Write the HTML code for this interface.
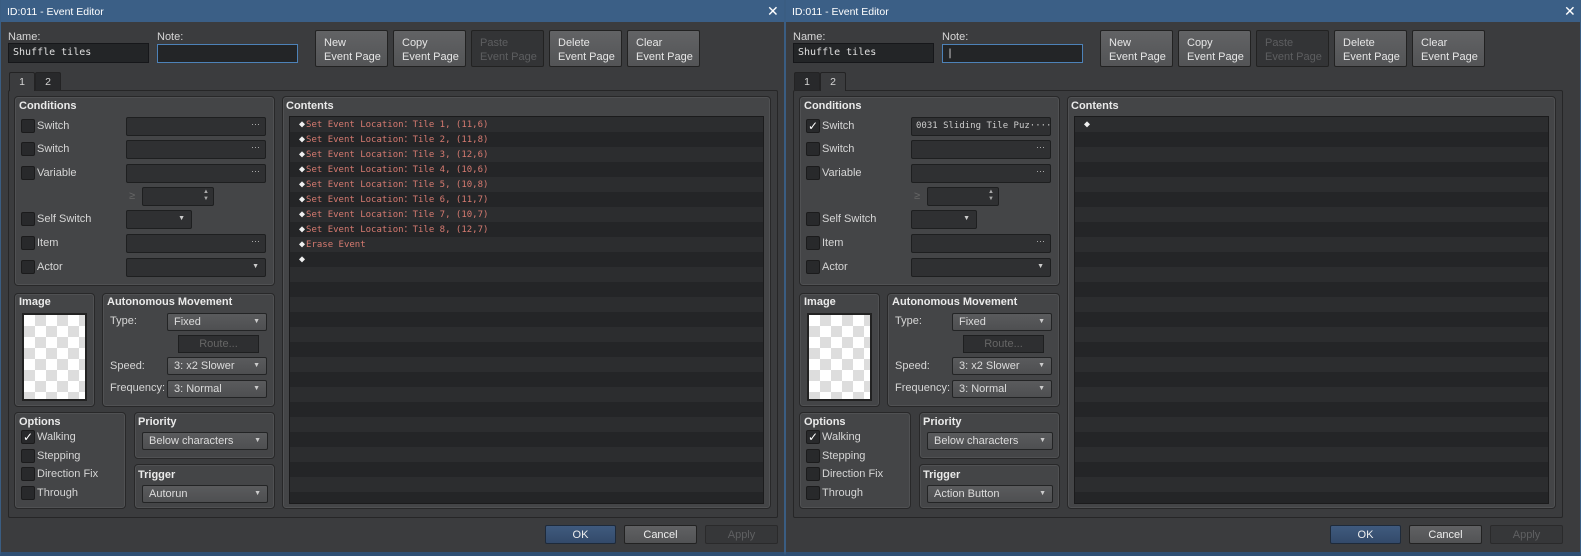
<!DOCTYPE html>
<html><head><meta charset="utf-8"><style>
*{box-sizing:border-box;margin:0;padding:0}
body{width:1581px;height:556px;background:#3a5d82;font-family:"Liberation Sans","DejaVu Sans",sans-serif;font-size:11px;color:#d6d6d6;overflow:hidden;position:relative}
.win{position:absolute;top:0;height:556px;background:#3b3c3e;border-left:1px solid #3a5d82;border-right:1px solid #3a5d82;border-bottom:4px solid #2f4f73;overflow:hidden}
.a{position:absolute;white-space:nowrap}
.title{left:0;right:0;top:0;height:22px;background:#3b5f86;color:#fff;padding:6px 0 0 6px;font-size:10.5px}
.x{position:absolute;top:3px;font-size:14px;color:#fff}
.inp{background:#232527;border:1px solid #16171a;font-family:"DejaVu Sans Mono",monospace;font-size:10px;padding:3px 4px;color:#e0e0e0}
.btn{background:linear-gradient(#626365,#535456);border:1px solid #222;border-radius:2px;color:#e6e6e6;padding:5px 0 0 8px;line-height:14px;font-size:11px}
.dis{background:#333436;color:#5d5e60}
.tab{height:19px;font-size:10.5px;text-align:center;padding-top:3px;border:1px solid #232324;border-bottom:none;border-radius:2px 2px 0 0}
.grp{background:#444547;border:1px solid #282829;border-radius:4px;box-shadow:inset 0 0 0 1px #505153}
.gt{font-weight:bold;color:#eaeaea;font-size:11px}
.cb{width:14px;height:14px;background:#28292b;border:1px solid #1b1b1c;border-radius:2px}
.fld{background:#2f3032;border:1px solid #1e1f20;border-radius:2px;height:19px;overflow:hidden}
.fld.e::after{content:"···";position:absolute;right:5px;top:1px;font-size:9px;color:#bbb}
.cmb{background:linear-gradient(#5a5b5d,#4e4f51);border:1px solid #232425;border-radius:2px;height:18px;padding:2px 0 0 6px;color:#dcdcdc}
.cmb::after,.dd::after{content:"▼";position:absolute;right:6px;top:4px;font-size:7px;color:#ccc}
.list{background:repeating-linear-gradient(#2c2d2f 0 15px,#242527 15px 30px);border:1px solid #1b1b1c}
.row{height:15px;line-height:15px;overflow:hidden;font-family:"DejaVu Sans Mono",monospace;font-size:9px;color:#d67a70;padding:0 0 0 9px;white-space:pre}
.row b{color:#f0f0f0;font-weight:normal;font-size:10px;margin-right:1px}
.chk{width:14px;height:14px;background:#28292b;border:1px solid #1b1b1c;border-radius:2px;color:#fff;font-size:12px;line-height:12px;text-align:center}
.ok{background:linear-gradient(#3f5a7e,#334a6a);border:1px solid #1e2a3a;color:#eee;text-align:center;padding-top:3px;border-radius:2px}
.cn{background:linear-gradient(#606163,#525355);border:1px solid #222;color:#eee;text-align:center;padding-top:3px;border-radius:2px}
.ap{background:#363739;border:1px solid #2a2a2b;color:#5f6062;text-align:center;padding-top:3px;border-radius:2px}
.chess{background-color:#fff;background-image:linear-gradient(45deg,#ddd 25%,transparent 25%,transparent 75%,#ddd 75%),linear-gradient(45deg,#ddd 25%,transparent 25%,transparent 75%,#ddd 75%);background-size:22px 22px;background-position:0 0,11px 11px;border:2px solid #222}
.l{margin-top:0}
</style></head><body>

<!-- WINDOW 1 -->
<div class="win" style="left:0;width:785px">
<div class="a title">ID:011 - Event Editor<span class="x" style="left:766px">✕</span></div>
<div class="a" style="left:7px;top:31px">Name:</div>
<div class="a inp" style="left:7px;top:43px;width:141px;height:20px">Shuffle tiles</div>
<div class="a" style="left:156px;top:31px">Note:</div>
<div class="a inp" style="left:156px;top:44px;width:141px;height:19px;border-color:#4d82b8"></div>
<div class="a btn" style="left:314px;top:30px;width:73px;height:37px">New<br>Event Page</div>
<div class="a btn" style="left:392px;top:30px;width:73px;height:37px">Copy<br>Event Page</div>
<div class="a btn dis" style="left:470px;top:30px;width:73px;height:37px">Paste<br>Event Page</div>
<div class="a btn" style="left:548px;top:30px;width:73px;height:37px">Delete<br>Event Page</div>
<div class="a btn" style="left:626px;top:30px;width:73px;height:37px">Clear<br>Event Page</div>
<div class="a" style="left:7px;top:90px;width:770px;height:428px;border:1px solid #262627;border-radius:2px"></div>
<div class="a tab" style="left:8px;top:72px;width:26px;height:19px;background:#3b3c3e">1</div>
<div class="a tab" style="left:34px;top:72px;width:26px;height:18px;background:#28292b">2</div>

<div class="a grp" style="left:13px;top:96px;width:261px;height:190px"></div>
<div class="a gt" style="left:18px;top:100px">Conditions</div>
<div class="a cb" style="left:20px;top:119px"></div><div class="a" style="left:36px;top:120px">Switch</div><div class="a fld e" style="left:125px;top:117px;width:140px"></div>
<div class="a cb" style="left:20px;top:142px"></div><div class="a" style="left:36px;top:143px">Switch</div><div class="a fld e" style="left:125px;top:140px;width:140px"></div>
<div class="a cb" style="left:20px;top:166px"></div><div class="a" style="left:36px;top:167px">Variable</div><div class="a fld e" style="left:125px;top:164px;width:140px"></div>
<div class="a" style="left:128px;top:190px;color:#666">≥</div><div class="a fld" style="left:141px;top:187px;width:72px"><span class="a" style="right:4px;top:1px;font-size:6px;color:#aaa;line-height:7px">▲<br>▼</span></div>
<div class="a cb" style="left:20px;top:212px"></div><div class="a" style="left:36px;top:213px">Self Switch</div><div class="a fld dd" style="left:125px;top:210px;width:66px"></div>
<div class="a cb" style="left:20px;top:236px"></div><div class="a" style="left:36px;top:237px">Item</div><div class="a fld e" style="left:125px;top:234px;width:140px"></div>
<div class="a cb" style="left:20px;top:260px"></div><div class="a" style="left:36px;top:261px">Actor</div><div class="a fld dd" style="left:125px;top:258px;width:140px"></div>

<div class="a grp" style="left:13px;top:293px;width:81px;height:114px"></div>
<div class="a gt" style="left:18px;top:296px">Image</div>
<div class="a chess" style="left:21px;top:313px;width:65px;height:88px"></div>

<div class="a grp" style="left:101px;top:293px;width:173px;height:114px"></div>
<div class="a gt" style="left:106px;top:296px">Autonomous Movement</div>
<div class="a" style="left:109px;top:315px">Type:</div><div class="a cmb" style="left:166px;top:313px;width:100px">Fixed</div>
<div class="a" style="left:177px;top:335px;width:81px;height:18px;background:#2e2f31;border:1px solid #1e1f20;color:#666;text-align:center;padding-top:2px">Route...</div>
<div class="a" style="left:109px;top:360px">Speed:</div><div class="a cmb" style="left:166px;top:357px;width:100px">3: x2 Slower</div>
<div class="a" style="left:109px;top:382px">Frequency:</div><div class="a cmb" style="left:166px;top:380px;width:100px">3: Normal</div>

<div class="a grp" style="left:13px;top:412px;width:112px;height:97px"></div>
<div class="a gt" style="left:18px;top:416px">Options</div>
<div class="a chk" style="left:20px;top:430px">✓</div><div class="a" style="left:36px;top:431px">Walking</div>
<div class="a cb" style="left:20px;top:449px"></div><div class="a" style="left:36px;top:450px">Stepping</div>
<div class="a cb" style="left:20px;top:467px"></div><div class="a" style="left:36px;top:468px">Direction Fix</div>
<div class="a cb" style="left:20px;top:486px"></div><div class="a" style="left:36px;top:487px">Through</div>

<div class="a grp" style="left:133px;top:412px;width:141px;height:47px"></div>
<div class="a gt" style="left:137px;top:416px">Priority</div>
<div class="a cmb" style="left:141px;top:432px;width:126px">Below characters</div>
<div class="a grp" style="left:133px;top:464px;width:141px;height:45px"></div>
<div class="a gt" style="left:137px;top:469px">Trigger</div>
<div class="a cmb" style="left:141px;top:485px;width:126px">Autorun</div>

<div class="a grp" style="left:281px;top:96px;width:489px;height:413px"></div>
<div class="a gt" style="left:285px;top:100px">Contents</div>
<div class="a list" style="left:288px;top:116px;width:475px;height:388px">
<div class="row"><b>◆</b>Set Event Location：Tile 1, (11,6)</div>
<div class="row"><b>◆</b>Set Event Location：Tile 2, (11,8)</div>
<div class="row"><b>◆</b>Set Event Location：Tile 3, (12,6)</div>
<div class="row"><b>◆</b>Set Event Location：Tile 4, (10,6)</div>
<div class="row"><b>◆</b>Set Event Location：Tile 5, (10,8)</div>
<div class="row"><b>◆</b>Set Event Location：Tile 6, (11,7)</div>
<div class="row"><b>◆</b>Set Event Location：Tile 7, (10,7)</div>
<div class="row"><b>◆</b>Set Event Location：Tile 8, (12,7)</div>
<div class="row"><b>◆</b>Erase Event</div>
<div class="row"><b>◆</b></div>
</div>
<div class="a ok" style="left:544px;top:525px;width:71px;height:19px">OK</div>
<div class="a cn" style="left:623px;top:525px;width:73px;height:19px">Cancel</div>
<div class="a ap" style="left:704px;top:525px;width:73px;height:19px">Apply</div>
</div>

<!-- WINDOW 2 -->
<div class="win" style="left:785px;width:796px">
<div class="a title">ID:011 - Event Editor<span class="x" style="left:778px">✕</span></div>
<div class="a" style="left:7px;top:31px">Name:</div>
<div class="a inp" style="left:7px;top:43px;width:141px;height:20px">Shuffle tiles</div>
<div class="a" style="left:156px;top:31px">Note:</div>
<div class="a inp" style="left:156px;top:44px;width:141px;height:19px;border-color:#4d82b8">|</div>
<div class="a btn" style="left:314px;top:30px;width:73px;height:37px">New<br>Event Page</div>
<div class="a btn" style="left:392px;top:30px;width:73px;height:37px">Copy<br>Event Page</div>
<div class="a btn dis" style="left:470px;top:30px;width:73px;height:37px">Paste<br>Event Page</div>
<div class="a btn" style="left:548px;top:30px;width:73px;height:37px">Delete<br>Event Page</div>
<div class="a btn" style="left:626px;top:30px;width:73px;height:37px">Clear<br>Event Page</div>
<div class="a" style="left:7px;top:90px;width:770px;height:428px;border:1px solid #262627;border-radius:2px"></div>
<div class="a tab" style="left:8px;top:72px;width:26px;height:18px;background:#28292b">1</div>
<div class="a tab" style="left:34px;top:72px;width:26px;height:19px;background:#3b3c3e">2</div>

<div class="a grp" style="left:13px;top:96px;width:261px;height:190px"></div>
<div class="a gt" style="left:18px;top:100px">Conditions</div>
<div class="a chk" style="left:20px;top:119px">✓</div><div class="a" style="left:36px;top:120px">Switch</div><div class="a fld" style="left:125px;top:117px;width:140px;font-family:'DejaVu Sans Mono',monospace;font-size:9px;padding:3px 4px;color:#ccc;white-space:nowrap">0031 Sliding Tile Puz····</div>
<div class="a cb" style="left:20px;top:142px"></div><div class="a" style="left:36px;top:143px">Switch</div><div class="a fld e" style="left:125px;top:140px;width:140px"></div>
<div class="a cb" style="left:20px;top:166px"></div><div class="a" style="left:36px;top:167px">Variable</div><div class="a fld e" style="left:125px;top:164px;width:140px"></div>
<div class="a" style="left:128px;top:190px;color:#666">≥</div><div class="a fld" style="left:141px;top:187px;width:72px"><span class="a" style="right:4px;top:1px;font-size:6px;color:#aaa;line-height:7px">▲<br>▼</span></div>
<div class="a cb" style="left:20px;top:212px"></div><div class="a" style="left:36px;top:213px">Self Switch</div><div class="a fld dd" style="left:125px;top:210px;width:66px"></div>
<div class="a cb" style="left:20px;top:236px"></div><div class="a" style="left:36px;top:237px">Item</div><div class="a fld e" style="left:125px;top:234px;width:140px"></div>
<div class="a cb" style="left:20px;top:260px"></div><div class="a" style="left:36px;top:261px">Actor</div><div class="a fld dd" style="left:125px;top:258px;width:140px"></div>

<div class="a grp" style="left:13px;top:293px;width:81px;height:114px"></div>
<div class="a gt" style="left:18px;top:296px">Image</div>
<div class="a chess" style="left:21px;top:313px;width:65px;height:88px"></div>

<div class="a grp" style="left:101px;top:293px;width:173px;height:114px"></div>
<div class="a gt" style="left:106px;top:296px">Autonomous Movement</div>
<div class="a" style="left:109px;top:315px">Type:</div><div class="a cmb" style="left:166px;top:313px;width:100px">Fixed</div>
<div class="a" style="left:177px;top:335px;width:81px;height:18px;background:#2e2f31;border:1px solid #1e1f20;color:#666;text-align:center;padding-top:2px">Route...</div>
<div class="a" style="left:109px;top:360px">Speed:</div><div class="a cmb" style="left:166px;top:357px;width:100px">3: x2 Slower</div>
<div class="a" style="left:109px;top:382px">Frequency:</div><div class="a cmb" style="left:166px;top:380px;width:100px">3: Normal</div>

<div class="a grp" style="left:13px;top:412px;width:112px;height:97px"></div>
<div class="a gt" style="left:18px;top:416px">Options</div>
<div class="a chk" style="left:20px;top:430px">✓</div><div class="a" style="left:36px;top:431px">Walking</div>
<div class="a cb" style="left:20px;top:449px"></div><div class="a" style="left:36px;top:450px">Stepping</div>
<div class="a cb" style="left:20px;top:467px"></div><div class="a" style="left:36px;top:468px">Direction Fix</div>
<div class="a cb" style="left:20px;top:486px"></div><div class="a" style="left:36px;top:487px">Through</div>

<div class="a grp" style="left:133px;top:412px;width:141px;height:47px"></div>
<div class="a gt" style="left:137px;top:416px">Priority</div>
<div class="a cmb" style="left:141px;top:432px;width:126px">Below characters</div>
<div class="a grp" style="left:133px;top:464px;width:141px;height:45px"></div>
<div class="a gt" style="left:137px;top:469px">Trigger</div>
<div class="a cmb" style="left:141px;top:485px;width:126px">Action Button</div>

<div class="a grp" style="left:281px;top:96px;width:489px;height:413px"></div>
<div class="a gt" style="left:285px;top:100px">Contents</div>
<div class="a list" style="left:288px;top:116px;width:475px;height:388px">
<div class="row"><b>◆</b></div>
</div>
<div class="a ok" style="left:544px;top:525px;width:71px;height:19px">OK</div>
<div class="a cn" style="left:623px;top:525px;width:73px;height:19px">Cancel</div>
<div class="a ap" style="left:704px;top:525px;width:73px;height:19px">Apply</div>
</div>
</body></html>
